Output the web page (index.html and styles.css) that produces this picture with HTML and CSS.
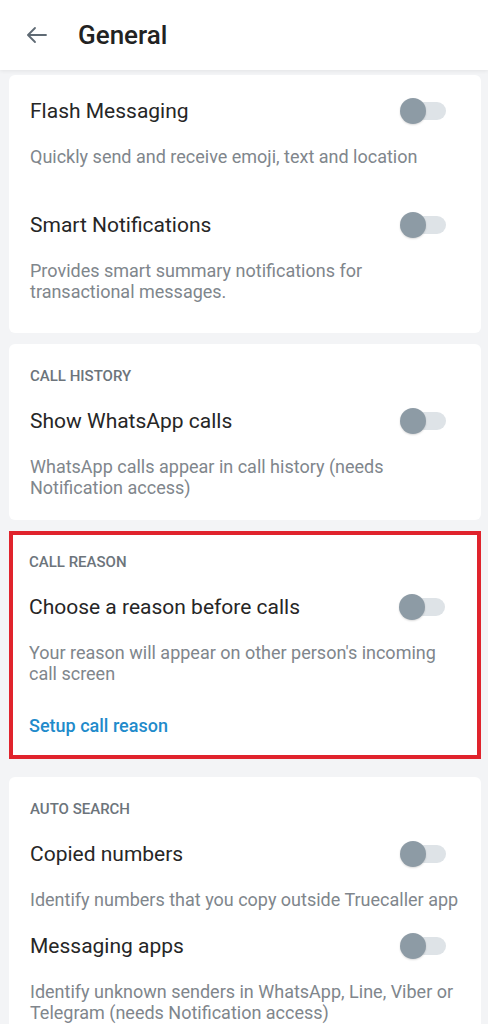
FILE: index.html
```html
<!DOCTYPE html>
<html lang="en">
<head>
    <meta charset="UTF-8">
    <meta name="viewport" content="width=device-width, initial-scale=1.0">
    <title>General</title>
    <link rel="stylesheet" href="styles.css">
</head>
<body>
    <header class="top-bar">
        <button class="back-btn" aria-label="Back">
            <svg width="22" height="18" viewBox="0 0 22 18" fill="none" stroke="#5f6a74" stroke-width="1.8" stroke-linecap="round" stroke-linejoin="round">
                <path d="M20 9H2.5"/>
                <path d="M9 2L2 9l7 7"/>
            </svg>
        </button>
        <h1 class="top-title">General</h1>
    </header>

    <main class="settings">
        <section class="card card-first">
            <div class="setting">
                <div class="setting-row">
                    <span class="setting-title">Flash Messaging</span>
                    <span class="toggle"></span>
                </div>
                <p class="setting-desc">Quickly send and receive emoji, text and location</p>
            </div>
            <div class="setting">
                <div class="setting-row">
                    <span class="setting-title">Smart Notifications</span>
                    <span class="toggle"></span>
                </div>
                <p class="setting-desc">Provides smart summary notifications for<br>transactional messages.</p>
            </div>
        </section>

        <section class="card">
            <h2 class="card-label">CALL HISTORY</h2>
            <div class="setting">
                <div class="setting-row">
                    <span class="setting-title">Show WhatsApp calls</span>
                    <span class="toggle"></span>
                </div>
                <p class="setting-desc">WhatsApp calls appear in call history (needs<br>Notification access)</p>
            </div>
        </section>

        <section class="card card-marked">
            <h2 class="card-label">CALL REASON</h2>
            <div class="setting">
                <div class="setting-row">
                    <span class="setting-title">Choose a reason before calls</span>
                    <span class="toggle"></span>
                </div>
                <p class="setting-desc">Your reason will appear on other person's incoming<br>call screen</p>
            </div>
            <a class="card-link" href="#">Setup call reason</a>
        </section>

        <section class="card">
            <h2 class="card-label">AUTO SEARCH</h2>
            <div class="setting">
                <div class="setting-row">
                    <span class="setting-title">Copied numbers</span>
                    <span class="toggle"></span>
                </div>
                <p class="setting-desc">Identify numbers that you copy outside Truecaller app</p>
            </div>
            <div class="setting">
                <div class="setting-row">
                    <span class="setting-title">Messaging apps</span>
                    <span class="toggle"></span>
                </div>
                <p class="setting-desc">Identify unknown senders in WhatsApp, Line, Viber or<br>Telegram (needs Notification access)</p>
            </div>
        </section>
    </main>
</body>
</html>
```

FILE: styles.css
```css
body {
    margin: 0;
    font-family: Roboto, 'Noto Sans', sans-serif;
    background-color: #f3f4f6;
    color: #262626;
    overflow: hidden;
}
.top-bar {
    height: 70px;
    display: flex;
    align-items: center;
    background-color: #ffffff;
    box-shadow: 0 1px 4px rgba(0, 0, 0, 0.07);
    position: relative;
}
.back-btn {
    width: 22px;
    height: 18px;
    margin: 0 0 0 26px;
    padding: 0;
    border: none;
    background: none;
    display: flex;
}
.top-title {
    margin: 0 0 0 30px;
    font-size: 26px;
    font-weight: 500;
    color: #222222;
}
.settings {
    display: flex;
    flex-direction: column;
    gap: 11px;
    padding: 5px 7px 0 9px;
}
.card {
    background-color: #ffffff;
    border-radius: 6px;
    padding: 22px 35px 22px 21px;
}
.card-first {
    padding-bottom: 31px;
}
.card-first .setting + .setting {
    margin-top: 44px;
}
.card-marked {
    border: 4px solid #e0232c;
    border-radius: 0;
    padding: 17px 32px 17px 16px;
    margin-bottom: 7px;
}
.card-label {
    margin: 0 0 21px;
    font-size: 15px;
    line-height: 20px;
    font-weight: 500;
    color: #6c747b;
}
.setting + .setting {
    margin-top: 22px;
}
.setting-row {
    display: flex;
    align-items: center;
    justify-content: space-between;
}
.setting-title {
    font-size: 21px;
    line-height: 28px;
    color: #262626;
}
/* lines are broken by hand, so the text may run under the toggle column */
.setting-desc {
    margin: 21px 0 0;
    font-size: 18px;
    line-height: 21px;
    color: #80868c;
    white-space: nowrap;
}
.toggle {
    position: relative;
    width: 46px;
    height: 26px;
    flex-shrink: 0;
}
.toggle::before {
    content: "";
    position: absolute;
    left: 10px;
    right: 0;
    top: 4px;
    height: 18px;
    border-radius: 9px;
    background-color: #dee3e7;
}
.toggle::after {
    content: "";
    position: absolute;
    left: 0;
    top: 0;
    width: 26px;
    height: 26px;
    border-radius: 50%;
    background-color: #8d9ba5;
    box-shadow: 0 1px 2px rgba(0, 0, 0, 0.15);
}
.card-link {
    display: block;
    margin-top: 30px;
    font-size: 18px;
    line-height: 24px;
    font-weight: 500;
    color: #1f8bcb;
    text-decoration: none;
}
```
